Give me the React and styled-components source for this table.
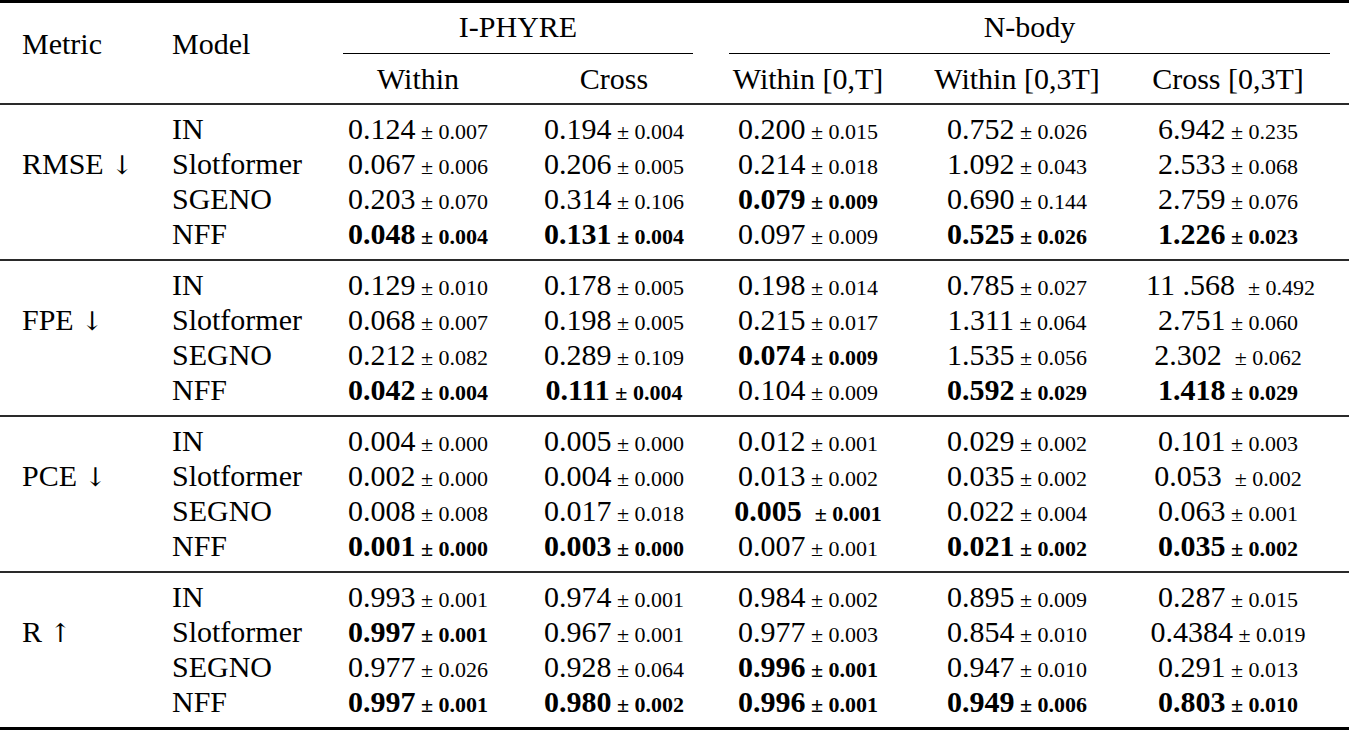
import styled, { createGlobalStyle } from 'styled-components';

const GlobalStyle = createGlobalStyle`
  html, body {
    margin: 0;
    padding: 0;
    background: #ffffff;
  }
  body {
    font-family: 'Liberation Serif', 'Times New Roman', 'DejaVu Serif', serif;
    color: #000;
  }
`;

const Table = styled.table`
  width: 1349px;
  table-layout: fixed;
  border-collapse: collapse;
  font-size: 30px;
  line-height: 34.5px;
  border-top: 3px solid #000;
  border-bottom: 3px solid #000;
`;

const Head = styled.thead`
  border-bottom: 2px solid #2a2a2a;
`;

const Group = styled.tbody`
  & + & {
    border-top: 2px solid #2a2a2a;
  }
  tr:first-child td {
    padding-top: 7px;
  }
  tr:last-child td {
    padding-bottom: 8px;
  }
`;

const HeadCell = styled.th`
  font-weight: normal;
  padding: 0;
  text-align: ${p => (p.$left ? 'left' : 'center')};
  vertical-align: top;
  white-space: nowrap;
`;

const LabelHead = styled(HeadCell)`
  padding-top: 24px;
  padding-left: ${p => p.$indent}px;
`;

const SpanTitle = styled.div`
  margin: 0 ${p => p.$trimRight}px 0 ${p => p.$trimLeft}px;
  padding: 7px 0 8px;
  border-bottom: 1px solid #000;
`;

const SubHead = styled(HeadCell)`
  padding: 8px 0 7px;
`;

const LabelCell = styled.td`
  padding: 0 0 0 ${p => p.$indent}px;
  text-align: left;
  white-space: nowrap;
`;

const Arrow = styled.span`
  font-family: 'DejaVu Serif', 'DejaVu Sans', serif;
  font-variant-emoji: text;
  font-size: 26px;
  color: #000;
`;

const ValueCell = styled.td`
  padding: 0;
  text-align: center;
  white-space: pre;
  font-weight: ${p => (p.$bold ? 'bold' : 'normal')};
`;

const Std = styled.span`
  font-size: 22px;
  line-height: 1;
`;

const columns = [165, 171, 164, 228, 160, 258, 164, 39];

const c = (text, bold = false) => {
  const [v, s] = text.split('|');
  return { v, s, bold };
};

const groups = [
  {
    metric: 'RMSE',
    arrow: '↓',
    rows: [
      ['IN', [c('0.124|0.007'), c('0.194|0.004'), c('0.200|0.015'), c('0.752|0.026'), c('6.942|0.235')]],
      ['Slotformer', [c('0.067|0.006'), c('0.206|0.005'), c('0.214|0.018'), c('1.092|0.043'), c('2.533|0.068')]],
      ['SGENO', [c('0.203|0.070'), c('0.314|0.106'), c('0.079|0.009', true), c('0.690|0.144'), c('2.759|0.076')]],
      ['NFF', [c('0.048|0.004', true), c('0.131|0.004', true), c('0.097|0.009'), c('0.525|0.026', true), c('1.226|0.023', true)]],
    ],
  },
  {
    metric: 'FPE',
    arrow: '↓',
    rows: [
      ['IN', [c('0.129|0.010'), c('0.178|0.005'), c('0.198|0.014'), c('0.785|0.027'), c('11 .568 |0.492')]],
      ['Slotformer', [c('0.068|0.007'), c('0.198|0.005'), c('0.215|0.017'), c('1.311|0.064'), c('2.751|0.060')]],
      ['SEGNO', [c('0.212|0.082'), c('0.289|0.109'), c('0.074|0.009', true), c('1.535|0.056'), c('2.302 |0.062')]],
      ['NFF', [c('0.042|0.004', true), c('0.111|0.004', true), c('0.104|0.009'), c('0.592|0.029', true), c('1.418|0.029', true)]],
    ],
  },
  {
    metric: 'PCE',
    arrow: '↓',
    rows: [
      ['IN', [c('0.004|0.000'), c('0.005|0.000'), c('0.012|0.001'), c('0.029|0.002'), c('0.101|0.003')]],
      ['Slotformer', [c('0.002|0.000'), c('0.004|0.000'), c('0.013|0.002'), c('0.035|0.002'), c('0.053 |0.002')]],
      ['SEGNO', [c('0.008|0.008'), c('0.017|0.018'), c('0.005 |0.001', true), c('0.022|0.004'), c('0.063|0.001')]],
      ['NFF', [c('0.001|0.000', true), c('0.003|0.000', true), c('0.007|0.001'), c('0.021|0.002', true), c('0.035|0.002', true)]],
    ],
  },
  {
    metric: 'R',
    arrow: '↑',
    rows: [
      ['IN', [c('0.993|0.001'), c('0.974|0.001'), c('0.984|0.002'), c('0.895|0.009'), c('0.287|0.015')]],
      ['Slotformer', [c('0.997|0.001', true), c('0.967|0.001'), c('0.977|0.003'), c('0.854|0.010'), c('0.4384|0.019')]],
      ['SEGNO', [c('0.977|0.026'), c('0.928|0.064'), c('0.996|0.001', true), c('0.947|0.010'), c('0.291|0.013')]],
      ['NFF', [c('0.997|0.001', true), c('0.980|0.002', true), c('0.996|0.001', true), c('0.949|0.006', true), c('0.803|0.010', true)]],
    ],
  },
];

const subHeads = ['Within', 'Cross', 'Within [0,T]', 'Within [0,3T]', 'Cross [0,3T]'];

export default function App() {
  return (
    <>
      <GlobalStyle />
      <Table>
        <colgroup>
          {columns.map((w, i) => (
            <col key={i} style={{ width: w }} />
          ))}
        </colgroup>
        <Head>
          <tr>
            <LabelHead $left $indent={22} rowSpan={2}>Metric</LabelHead>
            <LabelHead $left $indent={7} rowSpan={2}>Model</LabelHead>
            <HeadCell colSpan={2}>
              <SpanTitle $trimLeft={7} $trimRight={35}>I-PHYRE</SpanTitle>
            </HeadCell>
            <HeadCell colSpan={4}>
              <SpanTitle $trimLeft={1} $trimRight={19}>N-body</SpanTitle>
            </HeadCell>
          </tr>
          <tr>
            {subHeads.map(h => (
              <SubHead key={h}>{h}</SubHead>
            ))}
            <SubHead />
          </tr>
        </Head>
        {groups.map(g => (
          <Group key={g.metric}>
            {g.rows.map(([model, cells], ri) => (
              <tr key={model}>
                <LabelCell $indent={22}>
                  {ri === 1 && (
                    <>
                      {g.metric} <Arrow>{g.arrow}</Arrow>
                    </>
                  )}
                </LabelCell>
                <LabelCell $indent={7}>{model}</LabelCell>
                {cells.map((cell, ci) => (
                  <ValueCell key={ci} $bold={cell.bold}>
                    {cell.v}<Std> ± {cell.s}</Std>
                  </ValueCell>
                ))}
                <ValueCell />
              </tr>
            ))}
          </Group>
        ))}
      </Table>
    </>
  );
}
